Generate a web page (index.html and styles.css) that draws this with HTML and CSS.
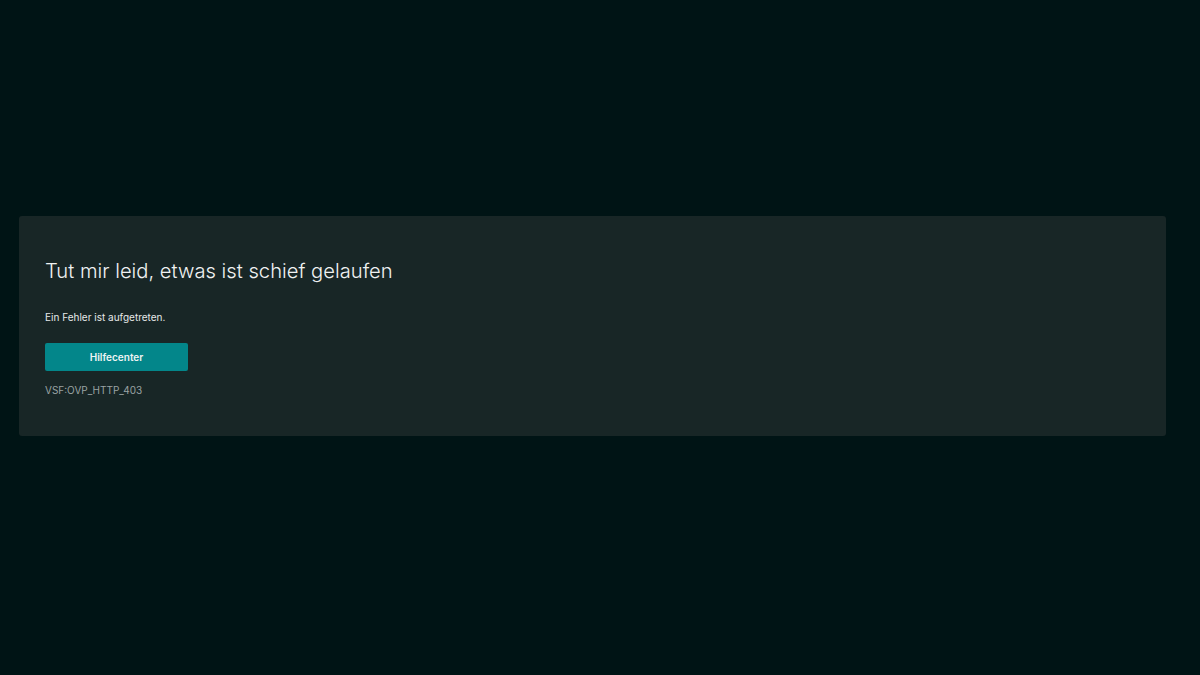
FILE: index.html
```html
<!DOCTYPE html>
<html lang="de">
<head>
<meta charset="utf-8">
<title>Fehler</title>
<link rel="stylesheet" href="styles.css">
</head>
<body>
<main class="page">
  <section class="card">
    <h1 class="title">Tut mir leid, etwas ist schief gelaufen</h1>
    <p class="message">Ein Fehler ist aufgetreten.</p>
    <button class="btn" type="button">Hilfecenter</button>
    <p class="code">VSF:OVP_HTTP_403</p>
  </section>
</main>
</body>
</html>
```

FILE: styles.css
```css
html, body {
  margin: 0;
  padding: 0;
  height: 100%;
  background: #001415;
}
body {
  font-family: Inter, "Noto Sans", sans-serif;
  color: #fff;
}
.page {
  height: 675px;
  display: flex;
  align-items: flex-start;
  padding: 216px 34px 0 19px;
  box-sizing: border-box;
}
.card {
  flex: 1;
  height: 220px;
  box-sizing: border-box;
  background: #182626;
  border-radius: 3px;
  padding: 42px 26px 0;
  display: flex;
  flex-direction: column;
  align-items: flex-start;
}
.title {
  margin: 0;
  font-size: 20.2px;
  font-weight: 300;
  line-height: 25px;
  color: #f0f2f2;
}
.message {
  margin: 27px 0 0;
  font-size: 10px;
  line-height: 14px;
  color: #e6e9e9;
}
.btn {
  margin-top: 19px;
  width: 143px;
  height: 28px;
  border: 0;
  border-radius: 2px;
  background: #03868a;
  color: #eef4f4;
  font-family: inherit;
  font-size: 10px;
  font-weight: 600;
  padding: 0;
}
.code {
  margin: 12px 0 0;
  font-size: 10px;
  line-height: 14px;
  color: #9aa3a3;
}
```
